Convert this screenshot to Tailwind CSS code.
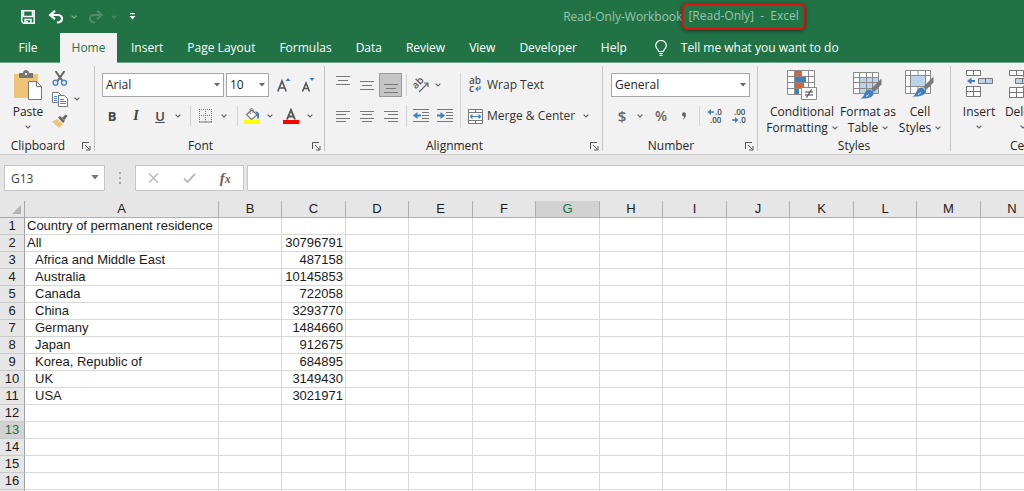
<!DOCTYPE html>
<html lang="en">
<head>
  <meta charset="UTF-8">
  <meta name="viewport" content="width=device-width, initial-scale=1.0">
  <title>Read-Only-Workbook [Read-Only] - Excel</title>
  <script src="https://cdn.jsdelivr.net/npm/@tailwindcss/browser@4"></script>
</head>
<body class="h-screen flex flex-col overflow-hidden bg-[#e6e6e6] text-[#262626] text-[12px] leading-4 font-['Open_Sans',sans-serif]">

  <!-- Shared icons -->
  <svg class="hidden">
    <symbol id="chevron" viewBox="0 0 6 4"><path d="M.6 .6 3 3 5.4 .6" fill="none" stroke="#666" stroke-width="1.2"/></symbol>
    <symbol id="chevron-light" viewBox="0 0 6 4"><path d="M.6 .6 3 3 5.4 .6" fill="none" stroke="currentColor" stroke-width="1.2"/></symbol>
    <symbol id="caret" viewBox="0 0 6 4"><path d="M0 0h6L3 3.6z" fill="currentColor"/></symbol>
    <symbol id="launcher" viewBox="0 0 9 9"><path d="M.5 7V.5H7M3 3l4.500 4.500M8 4v4H4" fill="none" stroke="#555"/></symbol>
    <symbol id="brush" viewBox="0 0 24 24">
      <path d="M22.500 1.500v6L15 15l-3-3z" fill="#7a7a7a"/>
      <path d="M11.500 12.500l3 3c.5 4-4 6.500-13.500 6 3-1 3.500-2.500 4.500-5 1-2.800 3.500-4.500 6-4z" fill="#3f7fbf"/>
      <path d="M7 19c1 .5 2-.5 2.500-1.500" stroke="#fff" fill="none"/>
    </symbol>
  </svg>

  <!-- Title bar -->
  <header class="bg-[#217346] text-white shrink-0">
    <div class="flex items-center h-[33px]">
      <div class="w-[55%] flex items-center pl-5">
        <button aria-label="Save" class="w-4 h-4 flex items-center justify-center">
          <svg class="w-[14px] h-[14px]" viewBox="0 0 14 14"><path d="M.8 .8h12.400v12.400H2.500L.8 11.500zM2.500 1v5.500h9V1M4 13V9.500h6V13" fill="none" stroke="#fff" stroke-width="1.500"/><path d="M5 11h2v3H5z" fill="#fff"/></svg>
        </button>
        <button aria-label="Undo" class="ml-3 w-4 h-4 flex items-center">
          <svg class="w-4 h-[14px]" viewBox="0 0 16 14"><path d="M2.500 5h7.500c5.500 0 5.500 7.500-1 7.500M7 .8 2.200 5 7 9.200" fill="none" stroke="#fff" stroke-width="2.200"/></svg>
        </button>
        <button aria-label="Undo list" class="w-4 pl-1 flex justify-center text-[#7fae93]"><svg class="w-[6px] h-1"><use href="#chevron-light"/></svg></button>
        <button aria-label="Redo" class="ml-2 w-4 h-4 flex items-center">
          <svg class="w-4 h-[14px]" viewBox="0 0 16 14"><path d="M13.500 5H6C.5 5 .5 12.500 7 12.500M9 .8 13.800 5 9 9.200" fill="none" stroke="#4d8f6b" stroke-width="2"/></svg>
        </button>
        <button aria-label="Redo list" class="w-4 pl-1 flex justify-center text-[#4d8f6b]"><svg class="w-[6px] h-1"><use href="#chevron-light"/></svg></button>
        <button aria-label="Customize toolbar" class="ml-1 w-4 flex justify-center">
          <svg class="w-[7px] h-[7px]" viewBox="0 0 7 7"><path d="M1 0h5v1.200H1zM.5 3h6L3.500 6.500z" fill="#fff"/></svg>
        </button>
      </div>
      <h1 class="flex items-center text-[#9cc5ae] whitespace-pre">
        <span>Read-Only-Workbook</span>
        <span class="h-[27px] px-1 leading-[22px] border-2 border-[#e80c0c] rounded-[5px] shadow-[0_1px_4px_rgba(0,0,0,0.5)]">[Read-Only]  -  Excel</span>
      </h1>
    </div>

    <!-- Ribbon tabs -->
    <nav class="flex h-[30px] items-stretch font-medium border-b border-[#6fa98a]">
      <a href="#" class="w-[60px] flex items-center justify-center pr-1">File</a>
      <a href="#" class="w-[57px] mr-[2px] -mb-px flex items-center justify-center bg-[#f2f2f2] text-[#217346]">Home</a>
      <a href="#" class="px-3 flex items-center">Insert</a>
      <a href="#" class="px-3 flex items-center">Page Layout</a>
      <a href="#" class="px-3 flex items-center">Formulas</a>
      <a href="#" class="px-3 flex items-center">Data</a>
      <a href="#" class="px-3 flex items-center">Review</a>
      <a href="#" class="px-3 flex items-center">View</a>
      <a href="#" class="px-3 flex items-center">Developer</a>
      <a href="#" class="px-3 flex items-center">Help</a>
      <a href="#" class="pl-4 flex items-center gap-[14px]">
        <svg class="w-3 h-4" viewBox="0 0 12 16"><path d="M3.500 11.500C3.500 9 .7 8.500.7 5.500a5.300 5 0 0 1 10.600 0c0 3-2.800 3.500-2.800 6zM4 13.500h4M4.500 15.300h3" fill="none" stroke="#fff" stroke-width="1.200"/></svg>
        <span>Tell me what you want to do</span>
      </a>
    </nav>
  </header>

  <!-- Ribbon -->
  <section class="flex h-[92px] shrink-0 pt-[3px] bg-[#f2f2f2] border-b border-[#cfcfcf] overflow-hidden">

    <!-- Clipboard -->
    <div class="w-[95px] h-[85px] shrink-0 flex flex-col justify-between border-r border-[#c6c6c6]">
      <div class="flex h-[74px]">
        <button class="w-12 pl-2 pt-1 flex flex-col items-center">
          <svg class="w-7 h-[30px]" viewBox="0 0 28 30">
            <path d="M0 4h24v24H0z" fill="#eec477"/>
            <path d="M5 3h4c0-4 6-4 6 0h4v5H5z" fill="#757575"/><path d="M11 3h2v2h-2z" fill="#f2f2f2"/>
            <path d="M14.500 11.500h8l5 5v13h-13z" fill="#fff" stroke="#777"/><path d="M22.500 11.500v5h5" fill="none" stroke="#777"/>
          </svg>
          <span class="mt-1">Paste</span>
          <svg class="w-[6px] h-1 mt-[5px]"><use href="#chevron"/></svg>
        </button>
        <div class="flex flex-col pt-[2px] pl-1">
          <button aria-label="Cut" class="h-[20px]">
            <svg class="w-4 h-[15px]" viewBox="0 0 16 15"><path d="M3.500 0 10.500 10M12.500 0 5.500 10" stroke="#666" stroke-width="2"/><circle cx="3.500" cy="11.700" r="2.400" fill="none" stroke="#4a86c5" stroke-width="1.400"/><circle cx="12" cy="11.700" r="2.400" fill="none" stroke="#4a86c5" stroke-width="1.400"/></svg>
          </button>
          <div class="flex items-center h-[22px]">
            <button aria-label="Copy">
              <svg class="w-4 h-[15px]" viewBox="0 0 16 15"><path d="M.5 .5h6l2 2v8h-8z" fill="#fff" stroke="#777"/><path d="M2 4.500h3M2 6.500h3M2 8.500h3" stroke="#4a86c5"/><path d="M6.500 3.500h6l3 3v8h-9z" fill="#fff" stroke="#777"/><path d="M8 7.500h4M8 9.500h6M8 11.500h6" stroke="#4a86c5"/></svg>
            </button>
            <button aria-label="Copy options" class="w-[18px] flex justify-center"><svg class="w-[6px] h-1"><use href="#chevron"/></svg></button>
          </div>
          <button aria-label="Format Painter" class="h-[22px]">
            <svg class="w-4 h-[14px]" viewBox="0 0 16 14"><path d="M0 7.500 5 5l6 5-4 4z" fill="#eec477"/><path d="M6 3.500 8 2l5 5-2 2z" fill="#666"/><path d="M10 4 13.500.5l2 1.500L12.500 6z" fill="#666"/></svg>
          </button>
        </div>
      </div>
      <div class="flex items-center h-[10px]">
        <span class="flex-1 text-center">Clipboard</span>
        <button aria-label="Clipboard settings" class="w-[18px] pl-[6px]"><svg class="w-[9px] h-[9px]"><use href="#launcher"/></svg></button>
      </div>
    </div>

    <!-- Font -->
    <div class="w-[230px] h-[85px] shrink-0 flex flex-col justify-between border-r border-[#c6c6c6]">
      <div class="pt-[7px]">
        <div class="flex items-center pl-[7px] h-6">
          <label class="relative">
            <select aria-label="Font" class="appearance-none w-[122px] h-6 px-[3px] border border-[#a6a6a6] bg-white"><option>Arial</option></select>
            <svg class="absolute right-1 top-[10px] w-[6px] h-1 text-[#666]"><use href="#caret"/></svg>
          </label>
          <label class="relative ml-[2px]">
            <select aria-label="Font size" class="appearance-none w-[43px] h-6 px-[3px] border border-[#a6a6a6] bg-white"><option>10</option></select>
            <svg class="absolute right-1 top-[10px] w-[6px] h-1 text-[#666]"><use href="#caret"/></svg>
          </label>
          <button aria-label="Increase font size" class="ml-[3px] w-6 flex justify-center">
            <svg class="w-[14px] h-4" viewBox="0 0 14 16"><path d="M.8 14.500 5 4l4.200 10.500M2.500 11h5" fill="none" stroke="#555" stroke-width="1.600"/><path d="M8.500 4h5L11 1z" fill="#3f7fbf"/></svg>
          </button>
          <button aria-label="Decrease font size" class="w-6 flex justify-center">
            <svg class="w-[14px] h-4" viewBox="0 0 14 16"><path d="M1.500 14.500 5 6l3.500 8.500M3 11.500h4" fill="none" stroke="#555" stroke-width="1.600"/><path d="M8.500 1h5L11 4z" fill="#3f7fbf"/></svg>
          </button>
        </div>
        <div class="flex items-center pl-[5px] h-6 mt-[7px] text-[#444]">
          <button aria-label="Bold" class="w-6 font-bold text-[13px]">B</button>
          <button aria-label="Italic" class="w-6 font-bold italic text-[14px] font-['Liberation_Serif',serif]">I</button>
          <button aria-label="Underline" class="w-6 font-semibold underline text-[13px]">U</button>
          <button aria-label="Underline styles" class="w-3 flex justify-center"><svg class="w-[6px] h-1"><use href="#chevron"/></svg></button>
          <span class="w-px h-5 ml-[6px] mr-[6px] bg-[#d2d2d2]"></span>
          <button aria-label="Borders" class="w-[18px] flex justify-center">
            <svg class="w-[14px] h-[14px]" viewBox="0 0 14 14"><path d="M.5 0v13M6.500 0v13M12.500 0v13M0 .5h13M0 6.500h13" stroke="#777" stroke-dasharray="1 1"/><path d="M0 13h13" stroke="#777"/></svg>
          </button>
          <button aria-label="Border styles" class="w-[18px] flex justify-center"><svg class="w-[6px] h-1"><use href="#chevron"/></svg></button>
          <span class="w-px h-5 mx-1 bg-[#d2d2d2]"></span>
          <button aria-label="Fill color" class="w-5 flex justify-center">
            <svg class="w-4 h-4" viewBox="0 0 16 16"><path d="M2.500 6.500 8 2l5 5-5.500 4.500z" fill="#fff" stroke="#777" stroke-width="1.200"/><path d="M6 6V2c0-2 3-2 3 0v3" fill="none" stroke="#777"/><path d="M11 3.500c4-.5 5 3 3.500 7.500C13 11 13 8 13 6.500z" fill="#3f7fbf"/><path d="M0 12h16v4H0z" fill="#ff0"/></svg>
          </button>
          <button aria-label="Fill colors" class="w-4 flex justify-center"><svg class="w-[6px] h-1"><use href="#chevron"/></svg></button>
          <button aria-label="Font color" class="w-[26px] flex justify-center">
            <svg class="w-4 h-4" viewBox="0 0 16 16"><path d="M4 11.500 8 2l4 9.500M5.500 8.500h5" fill="none" stroke="#555" stroke-width="1.900"/><path d="M0 12h16v4H0z" fill="#f00"/></svg>
          </button>
          <button aria-label="Font colors" class="w-3 flex justify-center"><svg class="w-[6px] h-1"><use href="#chevron"/></svg></button>
        </div>
      </div>
      <div class="flex items-center h-[10px]">
        <span class="flex-1 text-center">Font</span>
        <button aria-label="Font settings" class="w-[18px] pl-[6px]"><svg class="w-[9px] h-[9px]"><use href="#launcher"/></svg></button>
      </div>
    </div>

    <!-- Alignment -->
    <div class="w-[278px] h-[85px] shrink-0 flex flex-col justify-between border-r border-[#c6c6c6]">
      <div class="flex pt-[7px] pl-[6px] text-[#333]">
        <div class="grid grid-cols-3 w-[72px] gap-y-[7px]">
          <button aria-label="Top align" class="h-6 pt-[3px] flex justify-center"><svg class="w-[14px] h-[9px]" viewBox="0 0 14 9"><path d="M0 .5h14M2 4.500h10M0 8.500h14" stroke="#777"/></svg></button>
          <button aria-label="Middle align" class="h-6 flex items-center justify-center"><svg class="w-[14px] h-[9px]" viewBox="0 0 14 9"><path d="M0 .5h14M2 4.500h10M0 8.500h14" stroke="#777"/></svg></button>
          <button aria-label="Bottom align" class="h-6 w-[23px] flex items-end pb-[3px] justify-center bg-[#c5c5c5] border border-[#9a9a9a]"><svg class="w-[14px] h-[9px]" viewBox="0 0 14 9"><path d="M0 .5h14M2 4.500h10M0 8.500h14" stroke="#777"/></svg></button>
          <button aria-label="Align left" class="h-6 flex items-center justify-center"><svg class="w-[14px] h-[11px]" viewBox="0 0 14 11"><path d="M0 .5h14M0 3.500h10M0 7.500h14M0 10.500h10" stroke="#777"/></svg></button>
          <button aria-label="Center" class="h-6 flex items-center justify-center"><svg class="w-[14px] h-[11px]" viewBox="0 0 14 11"><path d="M0 .5h14M2 3.500h10M0 7.500h14M2 10.500h10" stroke="#777"/></svg></button>
          <button aria-label="Align right" class="h-6 flex items-center justify-center"><svg class="w-[14px] h-[11px]" viewBox="0 0 14 11"><path d="M0 .5h14M4 3.500h10M0 7.500h14M4 10.500h10" stroke="#777"/></svg></button>
        </div>
        <div class="flex flex-col gap-[7px] w-[58px] border-r border-[#d2d2d2]">
          <div class="flex items-center h-6 pl-[3px]">
            <span class="w-px h-[22px] bg-[#d2d2d2]"></span>
            <button aria-label="Orientation" class="w-[28px] flex justify-center">
              <svg class="w-4 h-[15px] overflow-visible" viewBox="0 0 16 15"><text x="5" y="8" text-anchor="middle" transform="rotate(-45 5 5)" font-size="10" font-weight="600" fill="#555">ab</text><path d="M6 14 14.500 5.500M11 5h4v4" fill="none" stroke="#666" stroke-width="1.200"/></svg>
            </button>
            <button aria-label="Orientation options" class="w-[6px]"><svg class="w-[6px] h-1"><use href="#chevron"/></svg></button>
          </div>
          <div class="flex items-center h-6 pl-[3px]">
            <span class="w-px h-[22px] bg-[#d2d2d2]"></span>
            <button aria-label="Decrease indent" class="w-6 pl-[6px]">
              <svg class="w-4 h-[14px]" viewBox="0 0 16 14"><path d="M0 .5h16M9 3.500h7M9 6.500h7M9 9.500h7M0 12.500h16" stroke="#777"/><path d="M2 6.500h6" stroke="#3f7fbf" stroke-width="2"/><path d="M4.500 3v7L0 6.500z" fill="#3f7fbf"/></svg>
            </button>
            <button aria-label="Increase indent" class="w-6 pl-[6px]">
              <svg class="w-4 h-[14px]" viewBox="0 0 16 14"><path d="M0 .5h16M9 3.500h7M9 6.500h7M9 9.500h7M0 12.500h16" stroke="#777"/><path d="M0 6.500h5" stroke="#3f7fbf" stroke-width="2"/><path d="M3.500 3v7L8 6.500z" fill="#3f7fbf"/></svg>
            </button>
          </div>
        </div>
        <div class="flex flex-col gap-[7px] pl-[7px]">
          <button class="flex items-center gap-1 h-6">
            <svg class="w-[15px] h-4 overflow-visible" viewBox="0 0 15 16"><text x="1" y="7" font-size="10" font-weight="600" fill="#555">ab</text><text x="1" y="15" font-size="10" font-weight="600" fill="#555">c</text><path d="M12 9v3H8.500M10 10l-2 2 2 2" fill="none" stroke="#3f7fbf" stroke-width="1.200"/></svg>
            <span>Wrap Text</span>
          </button>
          <div class="flex items-center h-6">
            <button class="flex items-center gap-1">
              <svg class="w-[15px] h-[15px]" viewBox="0 0 15 15"><path d="M.5 .5h14v14H.5zM.5 3.500h14M.5 11.500h14M7.500 .5v3M7.500 11.500v3" fill="#fff" stroke="#777"/><path d="M3 7.500h9M4.500 5.500l-2 2 2 2M10.500 5.500l2 2-2 2" fill="none" stroke="#3f7fbf" stroke-width="1.200"/></svg>
              <span>Merge &amp; Center</span>
            </button>
            <button aria-label="Merge options" class="ml-2"><svg class="w-[6px] h-1"><use href="#chevron"/></svg></button>
          </div>
        </div>
      </div>
      <div class="flex items-center h-[10px]">
        <span class="flex-1 text-center">Alignment</span>
        <button aria-label="Alignment settings" class="w-[18px] pl-[6px]"><svg class="w-[9px] h-[9px]"><use href="#launcher"/></svg></button>
      </div>
    </div>

    <!-- Number -->
    <div class="w-[155px] h-[85px] shrink-0 flex flex-col justify-between border-r border-[#c6c6c6]">
      <div class="pt-[7px] pl-2">
        <label class="relative block w-[139px] h-6">
          <select aria-label="Number format" class="appearance-none w-full h-6 px-[3px] border border-[#a6a6a6] bg-white"><option>General</option></select>
          <svg class="absolute right-1 top-[10px] w-[6px] h-1 text-[#666]"><use href="#caret"/></svg>
        </label>
        <div class="flex items-center h-6 mt-[7px] text-[#666] font-semibold">
          <button aria-label="Accounting format" class="w-[22px] text-[15px]">$</button>
          <button aria-label="Currency options" class="w-[14px] flex justify-center"><svg class="w-[6px] h-1"><use href="#chevron"/></svg></button>
          <button aria-label="Percent style" class="w-7 text-[14px]">%</button>
          <button aria-label="Comma style" class="w-[18px] flex justify-center"><svg class="w-[6px] h-2" viewBox="0 0 6 8"><path d="M1 2.200a2 2 0 1 1 4 0c0 3-1.500 4.800-3.500 5.500 1-1 1.500-2 1.500-3.300C1.800 4.400 1 3.400 1 2.200z" fill="#666"/></svg></button>
          <span class="w-px h-5 ml-[6px] bg-[#d2d2d2]"></span>
          <button aria-label="Increase decimal" class="ml-[6px] w-[18px] flex justify-center">
            <svg class="w-4 h-4 overflow-visible" viewBox="0 0 16 16" font-size="8" fill="#444"><text x="8" y="7">.0</text><text x="3" y="15">.00</text><path d="M3 4h4" stroke="#3f7fbf" stroke-width="1.600"/><path d="M4 1v6L.5 4z" fill="#3f7fbf"/></svg>
          </button>
          <button aria-label="Decrease decimal" class="ml-[6px] w-[18px] flex justify-center">
            <svg class="w-4 h-4 overflow-visible" viewBox="0 0 16 16" font-size="8" fill="#444"><text x="3" y="7">.00</text><text x="8" y="15">.0</text><path d="M1 12h4.500" stroke="#3f7fbf" stroke-width="1.600"/><path d="M4 9v6l3.500-3z" fill="#3f7fbf"/></svg>
          </button>
        </div>
      </div>
      <div class="flex items-center h-[10px]">
        <span class="flex-1 text-center">Number</span>
        <button aria-label="Number settings" class="w-[18px] pl-[6px]"><svg class="w-[9px] h-[9px]"><use href="#launcher"/></svg></button>
      </div>
    </div>

    <!-- Styles -->
    <div class="w-[193px] h-[85px] shrink-0 flex flex-col justify-between border-r border-[#c6c6c6]">
      <div class="flex h-[74px] pt-1 pl-[9px] text-center whitespace-nowrap">
        <button class="w-[70px] flex flex-col items-center">
          <svg class="w-[30px] h-[30px]" viewBox="0 0 30 30">
            <path d="M.5 .5h27v24H.5z" fill="#fff"/><path d="M8 0h6v6H8zM8 13h9v6H8z" fill="#d9603b"/><path d="M8 6h11v7H8zM8 19h4v6H8z" fill="#3f7fbf"/>
            <path d="M.5 .5h27v24H.5zM.5 6.500h27M.5 12.500h27M.5 18.500h27M7.500 .5v24M14.500 .5v24M21.500 .5v24" fill="none" stroke="#8a8a8a"/>
            <path d="M8 1h6v5H8zM8 13h8v5H8z" fill="#d9603b"/><path d="M8 7h11v5H8zM8 19h4v5H8z" fill="#3f7fbf"/>
            <path d="M14.500 17.500h15v12h-15z" fill="#fff" stroke="#8a8a8a"/><path d="M18 22h8M18 25h8M24.500 19.500l-5 8" stroke="#444" stroke-width="1.200"/>
          </svg>
          <span class="mt-1">Conditional</span>
          <span class="flex items-center gap-1">Formatting <svg class="w-[6px] h-1"><use href="#chevron"/></svg></span>
        </button>
        <button class="w-[62px] flex flex-col items-center">
          <svg class="w-[30px] h-[30px]" viewBox="0 0 30 30">
            <path d="M.5 2.500h25v21H.5z" fill="#fff"/><path d="M7 8h18v15H7z" fill="#bdd3ea"/>
            <path d="M.5 2.500h25v21H.5zM.5 7.500h25M.5 12.500h25M.5 18.500h25M6.500 2.500v21M13.500 2.500v21M19.500 2.500v21" fill="none" stroke="#8a8a8a"/>
            <use href="#brush" x="6" y="7" width="24" height="24"/>
          </svg>
          <span class="mt-1">Format as</span>
          <span class="flex items-center gap-1">Table <svg class="w-[6px] h-1"><use href="#chevron"/></svg></span>
        </button>
        <button class="w-[42px] flex flex-col items-center">
          <svg class="w-[30px] h-[30px]" viewBox="0 0 30 30">
            <path d="M.5 .5h25v23H.5z" fill="#fff" stroke="#8a8a8a"/><path d="M5.500 .5v23M20.500 .5v23M.5 5.500h25M.5 16.500h25M13 .5v5M13 16.500v7" stroke="#8a8a8a"/><path d="M6 6h14v10H6z" fill="#bdd3ea"/>
            <use href="#brush" x="6" y="5" width="24" height="24"/>
          </svg>
          <span class="mt-1">Cell</span>
          <span class="flex items-center gap-1">Styles <svg class="w-[6px] h-1"><use href="#chevron"/></svg></span>
        </button>
      </div>
      <span class="text-center leading-[10px]">Styles</span>
    </div>

    <!-- Cells -->
    <div class="w-[145px] h-[85px] shrink-0 flex flex-col justify-between border-r border-[#c6c6c6]">
      <div class="flex pt-1 pl-[6px]">
        <button class="w-11 flex flex-col items-center">
          <svg class="w-[27px] h-[30px]" viewBox="0 0 27 30">
            <path d="M.5 .5h14v5H.5zM7.500 .5v5M.5 16.500h14v10H.5zM.5 21.500h14M7.500 16.500v10" fill="#fff" stroke="#777"/>
            <path d="M12.500 8.500h14v5h-14zM19.500 8.500v5" fill="#bdd3ea" stroke="#777"/>
            <path d="M3 11h6" stroke="#3f7fbf" stroke-width="2"/><path d="M5.500 7.500v7L1 11z" fill="#3f7fbf"/>
          </svg>
          <span class="mt-1">Insert</span>
          <svg class="w-[6px] h-1 mt-[5px]"><use href="#chevron"/></svg>
        </button>
        <button class="w-11 flex flex-col items-center">
          <svg class="w-[28px] h-[30px]" viewBox="0 0 28 30">
            <path d="M.5 .5h14v5H.5zM7.500 .5v5M.5 17.500h14v10H.5zM.5 22.500h14M7.500 17.500v10" fill="#fff" stroke="#777"/>
            <path d="M6.500 8.500h14v5h-14zM13.500 8.500v5" fill="#bdd3ea" stroke="#777"/>
            <path d="M14 5l12 13M26 5 14 18" stroke="#d9603b" stroke-width="2.400"/>
          </svg>
          <span class="mt-1">Delete</span>
          <svg class="w-[6px] h-1 mt-[5px]"><use href="#chevron"/></svg>
        </button>
      </div>
      <span class="text-center leading-[10px]">Cells</span>
    </div>
  </section>

  <!-- Formula bar -->
  <section class="flex items-center shrink-0 h-[46px] pl-1">
    <label class="relative">
      <input type="text" aria-label="Name box" value="G13" class="w-[101px] h-[26px] px-[6px] bg-white border border-[#c6c6c6] text-[#444]">
      <svg class="absolute right-[6px] top-[10px] w-2 h-[5px] text-[#777]"><use href="#caret"/></svg>
    </label>
    <svg class="w-[30px] h-3" viewBox="0 0 30 12"><path d="M14 0h2v2h-2zM14 5h2v2h-2zM14 10h2v2h-2z" fill="#aaa"/></svg>
    <div class="flex items-center w-[109px] h-[26px] bg-white border border-[#c6c6c6]">
      <button aria-label="Cancel" class="w-9 flex justify-center"><svg class="w-[11px] h-[10px]" viewBox="0 0 11 10"><path d="M1 .5l9 9M10 .5l-9 9" stroke="#bbb" stroke-width="1.500"/></svg></button>
      <button aria-label="Enter" class="w-9 flex justify-center"><svg class="w-[13px] h-[10px]" viewBox="0 0 13 10"><path d="M1 5.500 4.500 9 12 1" fill="none" stroke="#bbb" stroke-width="2"/></svg></button>
      <button aria-label="Insert function" class="w-9 italic font-bold text-[15px] text-[#666] font-['Liberation_Serif',serif]">f<span class="text-[12px]">x</span></button>
    </div>
    <input type="text" aria-label="Formula" class="flex-1 min-w-0 ml-[3px] h-[26px] px-1 bg-white border border-r-0 border-[#c6c6c6]">
  </section>

  <!-- Sheet -->
  <main class="flex-1 min-h-0 overflow-hidden text-[#1a1a1a] text-[13px] leading-4 font-['Liberation_Sans',sans-serif]">
    <table class="table-fixed w-full border-separate border-spacing-0">
      <colgroup id="cols"></colgroup>
      <thead><tr id="head"></tr></thead>
      <tbody id="rows"></tbody>
    </table>
  </main>

  <script>
    const letters = "ABCDEFGHIJKLMN".split("");
    const selected = { col: "G", row: 13 };
    const data = [
      ["Country of permanent residence", ""],
      ["All", 30796791],
      ["Africa and Middle East", 487158],
      ["Australia", 10145853],
      ["Canada", 722058],
      ["China", 3293770],
      ["Germany", 1484660],
      ["Japan", 912675],
      ["Korea, Republic of", 684895],
      ["UK", 3149430],
      ["USA", 3021971]
    ];

    document.getElementById("cols").innerHTML = '<col class="w-[25px]">' + letters.map((l, i) =>
      l === "A" ? '<col class="w-[194px]">' : i % 2 ? '<col class="w-[63px]">' : '<col class="w-16">'
    ).join("");

    document.getElementById("head").innerHTML = `
      <th class="h-[17px] p-0 border-r border-b border-[#a8a8a8]">
        <svg class="ml-3 w-[9px] h-[9px]" viewBox="0 0 9 9"><path d="M9 0v9H0z" fill="#b4b4b4"/></svg>
      </th>` + letters.map(l => `
      <th class="h-[17px] p-0 font-normal border-r border-b border-[#b0b0b0] ${l === selected.col ? "bg-[#d2d2d2] text-[#217346]" : ""}">${l}</th>`).join("");

    let html = "";
    for (let r = 1; r <= 17; r++) {
      const row = data[r - 1] || ["", ""];
      html += `<tr><th class="h-[17px] p-0 font-normal border-r border-r-[#a0a0a0] border-b border-b-[#cacaca] ${r === selected.row ? "bg-[#d2d2d2] text-[#217346]" : ""}">${r < 17 ? r : ""}</th>`;
      letters.forEach(l => {
        const text = l === "A" ? row[0] : l === "C" ? row[1] : "";
        const pad = l === "C" ? "text-right pr-[2px]" : r > 2 ? "pl-[10px]" : "pl-[2px]";
        html += `<td class="h-[17px] p-0 bg-white border-r border-b border-[#d9d9d9] whitespace-nowrap ${pad}">${text}</td>`;
      });
      html += "</tr>";
    }
    document.getElementById("rows").innerHTML = html;
  </script>
</body>
</html>
